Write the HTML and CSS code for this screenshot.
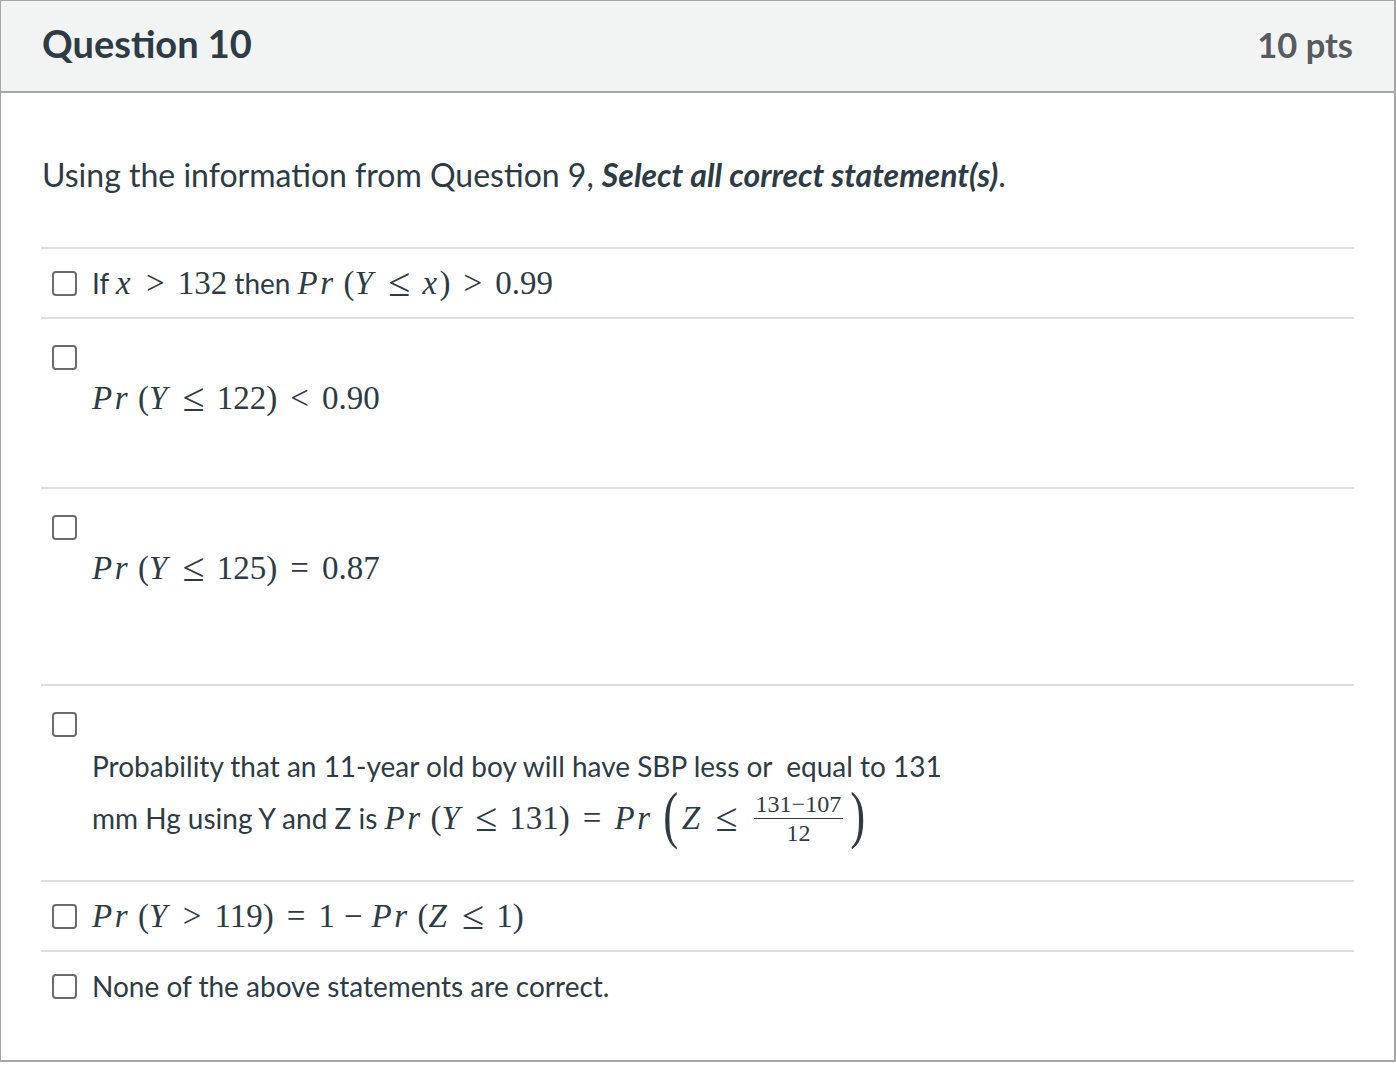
FILE: index.html
```html
<!DOCTYPE html>
<html>
<head>
<meta charset="utf-8">
<link rel="stylesheet" href="styles.css">
</head>
<body>
<div class="question">
  <div class="header">
    <h2 class="title">Question 10</h2>
    <span class="pts">10 pts</span>
  </div>
  <div class="body">
    <p class="qtext">Using the information from Question 9, <strong><em>Select all correct statement(s)</em></strong>.</p>
    <div class="answers">
      <div class="answer inline">
        <span class="cb"></span>
        <div class="label">If <span class="m"><i>x</i><span class="rel">&gt;</span>132</span> then <span class="m"><i>Pr</i><span class="op">(</span><i>Y</i><span class="rel le">≤</span><i>x</i>)<span class="rel">&gt;</span>0.99</span></div>
      </div>
      <div class="answer block a2">
        <span class="cb"></span>
        <div class="label"><p class="mline"><span class="m"><i>Pr</i><span class="op">(</span><i>Y</i><span class="rel le">≤</span>122)<span class="rel">&lt;</span>0.90</span></p></div>
      </div>
      <div class="answer block a3">
        <span class="cb"></span>
        <div class="label"><p class="mline"><span class="m"><i>Pr</i><span class="op">(</span><i>Y</i><span class="rel le">≤</span>125)<span class="rel">=</span>0.87</span></p></div>
      </div>
      <div class="answer block a4">
        <span class="cb"></span>
        <div class="label">
          <p class="tline">Probability that an 11-year old boy will have SBP less or&nbsp; equal to 131</p>
          <p class="tline2">mm Hg using Y and Z is&nbsp; <span class="m"><i>Pr</i><span class="op">(</span><i>Y</i><span class="rel le">≤</span>131)<span class="rel">=</span><i>Pr</i><span class="big op">(</span><i>Z</i><span class="rel le">≤</span><span class="frac"><span class="num">131−107</span><span class="den">12</span></span><span class="big">)</span></span></p>
        </div>
      </div>
      <div class="answer inline">
        <span class="cb"></span>
        <div class="label"><span class="m"><i>Pr</i><span class="op">(</span><i>Y</i><span class="rel">&gt;</span>119)<span class="rel">=</span>1<span class="bin">−</span><i>Pr</i><span class="op">(</span><i>Z</i><span class="rel le">≤</span>1)</span></div>
      </div>
      <div class="answer inline last">
        <span class="cb"></span>
        <div class="label">None of the above statements are correct.</div>
      </div>
    </div>
  </div>
</div>
</body>
</html>
```

FILE: styles.css
```css
html, body {
  margin: 0;
  padding: 0;
  background: #ffffff;
}
body {
  font-family: Lato, "Liberation Sans", sans-serif;
  color: #2d3b45;
}
.question {
  width: 1393px;
  height: 1059px;
  border: 1px solid #a6a6a6;
  border-bottom-width: 2px;
  border-right-width: 2px;
  box-sizing: content-box;
}
.header {
  height: 90px;
  background: #f2f3f3;
  border-bottom: 2px solid #a6a6a6;
  display: flex;
  align-items: center;
  justify-content: space-between;
  padding: 0 41px 0 41px;
}
.title {
  margin: 0;
  font-size: 38px;
  font-weight: 700;
  color: #2d3b45;
  position: relative;
  top: -3px;
}
.pts {
  font-size: 34.5px;
  font-weight: 700;
  color: #555b60;
  position: relative;
  top: -2px;
}
.body {
  padding: 0 40px 0 40px;
}
.qtext {
  margin: 0;
  padding: 58px 0 0 1px;
  height: 96px;
  font-size: 32px;
  line-height: 48px;
}
.qtext strong {
  font-weight: 700;
}
.answers {
  border-top: 2px solid #dedede;
}
.answer {
  display: flex;
  align-items: flex-start;
  border-bottom: 2px solid #dedede;
  padding-left: 11px;
}
.answer.last {
  border-bottom: none;
}
.answer.inline {
  align-items: center;
  height: 68px;
}
.cb {
  flex: none;
  width: 21px;
  height: 21px;
  border: 2px solid #6b6b6b;
  border-radius: 4px;
  box-sizing: content-box;
}
.answer.block .cb {
  margin-top: 26px;
}
.label {
  margin-left: 15px;
  font-size: 28px;
  line-height: 34px;
}
.mline {
  margin: 0;
  padding-top: 62px;
}
.a2 { height: 168px; }
.a3 { height: 195px; }
.a4 { height: 194px; }
.tline {
  margin: 0;
  padding-top: 63px;
  line-height: 34px;
}
.tline2 {
  margin: 0;
  padding-top: 3px;
  line-height: 40px;
  display: flex;
  align-items: center;
}
.m {
  font-family: "Liberation Serif", "DejaVu Serif", serif;
  font-size: 33px;
  display: inline-flex;
  align-items: center;
  white-space: nowrap;
}
.m i {
  font-style: italic;
  letter-spacing: 2.5px;
}
.op {
  margin-left: 8px;
}
.rel {
  margin: 0 13px;
}
.rel.le {
  font-size: 40px;
  line-height: 34px;
  margin: 0 12px 0 13px;
}
.bin {
  margin: 0 9px;
}
.big {
  font-size: 64px;
  line-height: 64px;
  font-weight: 300;
  transform: scaleX(0.7);
  display: inline-block;
  position: relative;
  top: -3px;
}
.frac {
  display: inline-flex;
  flex-direction: column;
  align-items: center;
  font-size: 24px;
  line-height: 22px;
  margin: 0 4px;
}
.num {
  border-bottom: 1.5px solid #2d3b45;
  padding: 0 2px 3px 2px;
}
.den {
  padding-top: 3px;
}
```
